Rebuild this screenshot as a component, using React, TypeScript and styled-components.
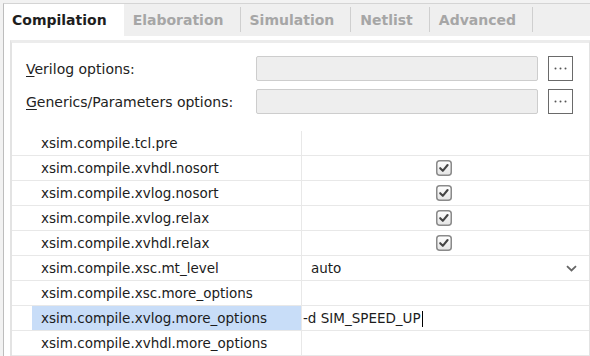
import React from "react";
import styled, { createGlobalStyle } from "styled-components";

const Global = createGlobalStyle`
  html, body { margin: 0; padding: 0; background: #f2f2f2; }
  body { font-family: "DejaVu Sans", "Liberation Sans", sans-serif; }
  #root { width: 590px; height: 356px; overflow: hidden; }
`;

const Frame = styled.div`
  margin: 3px 0 0 3px;
  height: 353px;
  border-top: 1px solid #d4d4d4;
  border-left: 1px solid #bdbdbd;
  background: #ffffff;
  display: flex;
  flex-direction: column;
`;

const TabBar = styled.div`
  display: flex;
  height: 32px;
  background: #efefef;
  flex-shrink: 0;
`;

const Tab = styled.div<{ $active?: boolean; $sep?: boolean }>`
  display: flex;
  align-items: center;
  padding: 0 17px 0 ${(p) => (p.$active ? "8px" : "9px")};
  font-size: 14px;
  font-weight: bold;
  color: ${(p) => (p.$active ? "#1e1e1e" : "#a6a6a6")};
  background: ${(p) => (p.$active ? "#ffffff" : "transparent")};
  position: relative;
  &::after {
    content: "";
    display: ${(p) => (p.$sep ? "block" : "none")};
    position: absolute;
    right: 0;
    top: 3px;
    bottom: 4px;
    width: 1px;
    background: #cfcfcf;
  }
`;

const Content = styled.div`
  flex: 1;
  padding: 4px 0 0 6px;
  display: flex;
  flex-direction: column;
  min-height: 0;
`;

const Panel = styled.div`
  flex: 1;
  border-top: 3px solid #ececec;
  border-left: 2px solid #e3e3e3;
  border-right: 1px solid #e3e3e3;
  display: flex;
  flex-direction: column;
`;

const Options = styled.div`
  display: grid;
  grid-template-columns: 220px 282px 25px;
  column-gap: 10px;
  row-gap: 8px;
  padding: 13px 0 17px 14px;
`;

const Label = styled.div`
  font-size: 14px;
  color: #222;
  display: flex;
  align-items: center;
  white-space: nowrap;
  u { text-decoration: underline; text-underline-offset: 2px; }
`;

const Field = styled.div`
  height: 25px;
  box-sizing: border-box;
  background: #eeeeee;
  border: 1px solid #cdcdcd;
  border-radius: 2px;
`;

const DotsButton = styled.div`
  width: 25px;
  height: 25px;
  box-sizing: border-box;
  border: 1px solid #6a6a6a;
  background: #fff;
  display: flex;
  align-items: center;
  justify-content: center;
`;

const Table = styled.div`
  display: flex;
  flex-direction: column;
`;

const Row = styled.div`
  display: grid;
  grid-template-columns: 20px 269px 1px 1fr;
  height: 25px;
  box-sizing: border-box;
  border-bottom: 1px solid #e8e8e8;
`;

const Divider = styled.div`
  background: #e8e8e8;
`;

const NameCell = styled.div<{ $selected?: boolean }>`
  display: flex;
  align-items: center;
  padding-left: 9px;
  font-size: 13.5px;
  color: #1c1c1c;
  white-space: nowrap;
  background: ${(p) => (p.$selected ? "#c8ddf8" : "transparent")};
`;

const ValueCell = styled.div<{ $align?: "center" | "left"; $pad?: number }>`
  display: flex;
  align-items: center;
  justify-content: ${(p) => (p.$align === "center" ? "center" : "space-between")};
  padding: 0 12px 0 ${(p) => p.$pad ?? 9}px;
  font-size: 13.5px;
  color: #1c1c1c;
  white-space: nowrap;
`;

const Caret = styled.span`
  display: inline-block;
  width: 1px;
  height: 16px;
  background: #000;
  margin-left: 1px;
  vertical-align: middle;
`;

const Check = () => (
  <svg width="16" height="16" viewBox="0 0 16 16">
    <defs>
      <linearGradient id="cg" x1="0" y1="0" x2="0" y2="1">
        <stop offset="0" stopColor="#ffffff" />
        <stop offset="1" stopColor="#e4e4e4" />
      </linearGradient>
    </defs>
    <rect x="0.75" y="0.75" width="14.5" height="14.5" rx="3" fill="url(#cg)" stroke="#8a8a8a" strokeWidth="1.5" />
    <path d="M4.2 8.2 L6.8 10.8 L11.6 5" fill="none" stroke="#454545" strokeWidth="2.1" strokeLinecap="round" strokeLinejoin="round" />
  </svg>
);

const Chevron = () => (
  <svg width="11" height="7" viewBox="0 0 11 7">
    <path d="M1 1.2 L5.5 5.5 L10 1.2" fill="none" stroke="#666" strokeWidth="1.8" />
  </svg>
);

const Dots = () => (
  <svg width="15" height="3" viewBox="0 0 15 3">
    <circle cx="2.5" cy="1.5" r="1" fill="#555" />
    <circle cx="7.5" cy="1.5" r="1" fill="#555" />
    <circle cx="12.5" cy="1.5" r="1" fill="#555" />
  </svg>
);

type Prop = { name: string; kind: "empty" | "check" | "select" | "edit"; value?: string; selected?: boolean };

const props: Prop[] = [
  { name: "xsim.compile.tcl.pre", kind: "empty" },
  { name: "xsim.compile.xvhdl.nosort", kind: "check" },
  { name: "xsim.compile.xvlog.nosort", kind: "check" },
  { name: "xsim.compile.xvlog.relax", kind: "check" },
  { name: "xsim.compile.xvhdl.relax", kind: "check" },
  { name: "xsim.compile.xsc.mt_level", kind: "select", value: "auto" },
  { name: "xsim.compile.xsc.more_options", kind: "empty" },
  { name: "xsim.compile.xvlog.more_options", kind: "edit", value: "-d SIM_SPEED_UP", selected: true },
  { name: "xsim.compile.xvhdl.more_options", kind: "empty" },
];

export default function App() {
  return (
    <>
      <Global />
      <Frame>
        <TabBar>
          <Tab $active>Compilation</Tab>
          <Tab $sep>Elaboration</Tab>
          <Tab $sep>Simulation</Tab>
          <Tab $sep>Netlist</Tab>
          <Tab $sep>Advanced</Tab>
        </TabBar>
        <Content>
          <Panel>
            <Options>
              <Label>
                <span><u>V</u>erilog options:</span>
              </Label>
              <Field />
              <DotsButton><Dots /></DotsButton>
              <Label>
                <span><u>G</u>enerics/Parameters options:</span>
              </Label>
              <Field />
              <DotsButton><Dots /></DotsButton>
            </Options>
            <Table>
              {props.map((p) => (
                <Row key={p.name}>
                  <div />
                  <NameCell $selected={p.selected}>{p.name}</NameCell>
                  <Divider />
                  {p.kind === "check" ? (
                    <ValueCell $align="center"><Check /></ValueCell>
                  ) : p.kind === "select" ? (
                    <ValueCell>
                      <span>{p.value}</span>
                      <Chevron />
                    </ValueCell>
                  ) : p.kind === "edit" ? (
                    <ValueCell $pad={1}>
                      <span>{p.value}<Caret /></span>
                    </ValueCell>
                  ) : (
                    <ValueCell />
                  )}
                </Row>
              ))}
            </Table>
          </Panel>
        </Content>
      </Frame>
    </>
  );
}
